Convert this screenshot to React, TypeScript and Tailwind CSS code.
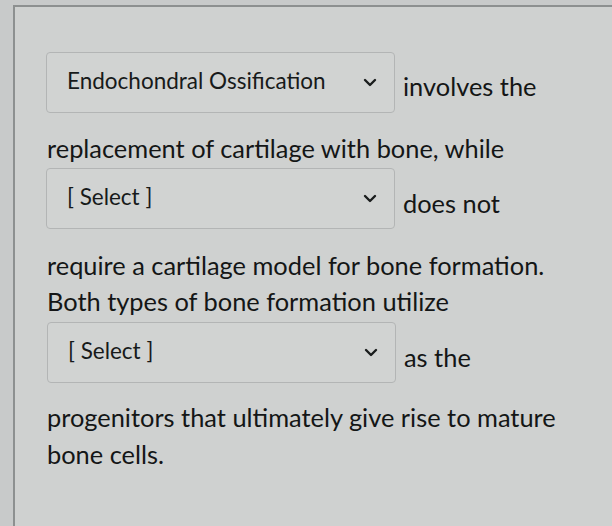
import React from "react";

function Chevron() {
  return (
    <svg width="14" height="9" viewBox="0 0 14 9" fill="none" className="shrink-0">
      <path d="M2 2 L7 7 L12 2" stroke="#1a1d1d" strokeWidth="2.4" strokeLinecap="round" strokeLinejoin="round" />
    </svg>
  );
}

function SelectBox({ label }: { label: string }) {
  return (
    <div className="w-[349px] h-[61px] shrink-0 rounded-[4px] border border-[#b3b5b5] bg-[#d1d3d2] flex items-center pl-[20px] pr-[17px]">
      <span className="flex-1 text-[22.5px] leading-none text-[#171a1a] -mt-[3px]">{label}</span>
      <Chevron />
    </div>
  );
}

export default function App() {
  return (
    <div className="w-[612px] h-[526px] bg-[#c8caca] overflow-hidden" style={{ fontFamily: "Lato, 'Open Sans', sans-serif" }}>
      <div className="ml-[13px] mt-[5px] h-[540px] border-l-2 border-t-2 border-[#8d9090] bg-[#cfd1d0] pl-[31px] pt-[45px] text-[#141616]">
        <div className="flex items-start gap-[8px]">
          <SelectBox label="Endochondral Ossification" />
          <span className="text-[25.4px] leading-[36px] mt-[16px]">involves the</span>
        </div>
        <p className="text-[25.4px] leading-[36px] mt-[17px] pl-[1px]">replacement of cartilage with bone, while</p>
        <div className="flex items-start gap-[8px] mt-[2px]">
          <SelectBox label="[ Select ]" />
          <span className="text-[25.4px] leading-[36px] mt-[17px]">does not</span>
        </div>
        <p className="text-[25.4px] leading-[36px] mt-[18px] pl-[1px]">
          require a cartilage model for bone formation.
          <br />
          Both types of bone formation utilize
        </p>
        <div className="flex items-start gap-[8px] mt-[3px] pl-[1px]">
          <SelectBox label="[ Select ]" />
          <span className="text-[25.4px] leading-[36px] mt-[17px]">as the</span>
        </div>
        <p className="text-[25.4px] leading-[37px] mt-[16px] pl-[1px]">
          progenitors that ultimately give rise to mature
          <br />
          bone cells.
        </p>
      </div>
    </div>
  );
}
